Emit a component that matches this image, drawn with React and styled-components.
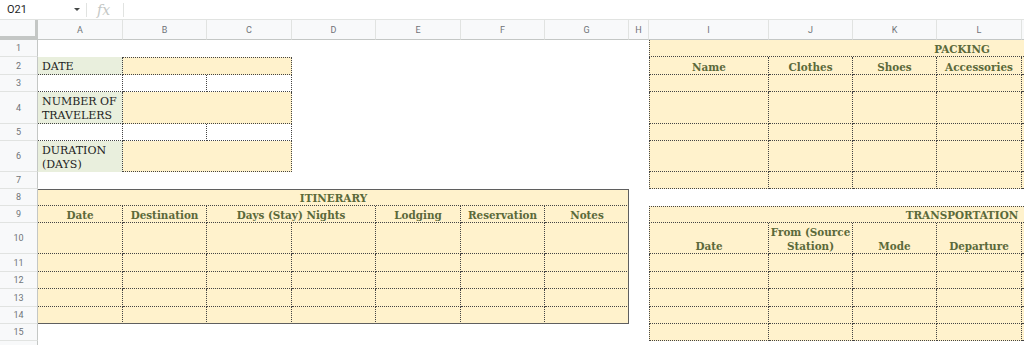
import React from 'react'
import styled, { createGlobalStyle } from 'styled-components'

const GlobalStyle = createGlobalStyle`
  *, *::before, *::after { box-sizing: border-box; }
  html, body { margin: 0; padding: 0; background: #fff; overflow: hidden; }
  body { font-family: Roboto, "Liberation Sans", sans-serif; }
`

// column widths: row header, A..O
const COLS = [38, 85, 84, 85, 84, 85, 84, 84, 20, 120, 84, 84, 85, 84, 84, 84]
// M..O lie past the window edge, their letters are never seen
const LETTERS = 'ABCDEFGHIJKL'.split('').concat(['', '', ''])
// sheet rows 1..16
const ROWS = [17, 18, 17, 32, 17, 31, 17, 17, 17, 31, 18, 17, 18, 17, 17, 17]
const VISIBLE_ROWS = 15

const DOT = '1px dotted #444'
const YELLOW = '#fff2cc'
const GREEN = '#e9efdd'
const OLIVE = '#5b693a'

const px = (list) => list.map((n) => `${n}px`).join(' ')

const Page = styled.div`
  width: 1024px;
  height: 345px;
  overflow: hidden;
  background: #fff;
`

const FormulaBar = styled.div`
  display: flex;
  align-items: center;
  height: 20px;
  border-bottom: 1px solid #e1e3e1;
`

const NameBox = styled.div`
  display: flex;
  align-items: center;
  justify-content: space-between;
  width: 86px;
  padding: 0 6px 0 7px;
  font-size: 11px;
  color: #1f1f1f;
`

const Caret = styled.span`
  width: 0;
  height: 0;
  border-left: 3px solid transparent;
  border-right: 3px solid transparent;
  border-top: 3px solid #444746;
`

const Divider = styled.span`
  width: 1px;
  height: 14px;
  background: #e1e3e1;
`

const FxLabel = styled.span`
  width: 36px;
  padding-left: 10px;
  font-family: "DejaVu Serif", serif;
  font-style: italic;
  font-size: 14px;
  color: #c4c7c5;
  line-height: 14px;
`

const Sheet = styled.div`
  display: grid;
  grid-template-columns: ${px(COLS)};
  grid-template-rows: 20px ${px(ROWS)};
  width: ${COLS.reduce((a, b) => a + b, 0)}px;
`

const Corner = styled.div`
  background: #f8f9fa;
  border-right: 3px solid #c4c7c5;
  border-bottom: 4px solid #c4c7c5;
`

const ColHead = styled.div`
  display: flex;
  align-items: center;
  justify-content: center;
  background: #f8f9fa;
  border-right: 1px solid #e1e3e1;
  border-bottom: 1px solid #c4c7c5;
  font-size: 9px;
  color: #6f7378;
`

const RowHead = styled.div`
  grid-column: 1;
  grid-row: ${(p) => p.$row};
  display: flex;
  align-items: center;
  justify-content: center;
  background: #f8f9fa;
  border-right: 1px solid #c4c7c5;
  border-bottom: 1px solid #e1e3e1;
  font-size: 9px;
  color: #6f7378;
`

const Block = styled.div`
  position: relative;
  grid-column: ${(p) => p.$col};
  grid-row: ${(p) => p.$row};
  display: grid;
  grid-template-columns: ${(p) => px(p.$cols)};
  grid-template-rows: ${(p) => px(p.$rows)};
  background: ${(p) => p.$bg || 'transparent'};

  ${(p) =>
    p.$frame &&
    `
    &::after {
      content: '';
      position: absolute;
      inset: 0;
      border-top: 1px solid #5f5f5f;
      border-right: 1px solid #5f5f5f;
      border-bottom: 1px solid #5f5f5f;
      pointer-events: none;
    }
  `}
`

const Cell = styled.div`
  grid-column: span ${(p) => p.$span || 1};
  display: flex;
  align-items: flex-end;
  justify-content: ${(p) => (p.$center ? 'center' : 'flex-start')};
  text-align: ${(p) => (p.$center ? 'center' : 'left')};
  min-width: 0;
  padding: 0 4px;
  background: ${(p) => p.$bg || 'transparent'};
  border-top: ${(p) => (p.$t ? DOT : 'none')};
  border-left: ${(p) => (p.$l ? DOT : 'none')};
  border-right: ${(p) => (p.$r ? DOT : 'none')};
  border-bottom: ${(p) => (p.$b ? DOT : 'none')};
  font-family: "DejaVu Serif", "Liberation Serif", serif;
  font-size: ${(p) => (p.$head ? '10.4px' : '11px')};
  font-weight: ${(p) => (p.$head ? 700 : 400)};
  color: ${(p) => (p.$head ? OLIVE : '#222')};
  line-height: 14px;
  white-space: nowrap;
`

const range = (n) => Array.from({ length: n }, (_, i) => i)

const InfoBlock = () => (
  <Block $col="2 / 5" $row="3 / 8" $cols={[85, 84, 85]} $rows={[18, 17, 32, 17, 31]}>
    <Cell $bg={GREEN} $r $b>DATE</Cell>
    <Cell $bg={YELLOW} $span={2} $t $r $b />
    <Cell $r $b />
    <Cell $r $b />
    <Cell $r $b />
    <Cell $bg={GREEN} $r $b>
      NUMBER OF
      <br />
      TRAVELERS
    </Cell>
    <Cell $bg={YELLOW} $span={2} $r $b />
    <Cell $r $b />
    <Cell $r $b />
    <Cell $r $b />
    <Cell $bg={GREEN} $r>
      DURATION
      <br />
      (DAYS)
    </Cell>
    <Cell $bg={YELLOW} $span={2} $r $b />
  </Block>
)

const itineraryHeads = [
  { label: 'Date' },
  { label: 'Destination' },
  { label: 'Days (Stay) Nights', span: 2 },
  { label: 'Lodging' },
  { label: 'Reservation' },
  { label: 'Notes', last: true },
]

const Itinerary = () => (
  <Block
    $col="2 / 9"
    $row="9 / 16"
    $cols={[85, 84, 85, 84, 85, 84, 84]}
    $rows={[17, 17, 31, 18, 17, 18, 17]}
    $bg={YELLOW}
    $frame
  >
    <Cell $span={7} $center $head $b>ITINERARY</Cell>
    {itineraryHeads.map((h) => (
      <Cell key={h.label} $span={h.span} $center $head $r={!h.last} $b>
        {h.label}
      </Cell>
    ))}
    {range(5).map((r) =>
      range(7).map((c) => <Cell key={`${r}-${c}`} $r={c < 6} $b={r < 4} />)
    )}
  </Block>
)

const RIGHT_COLS = [120, 84, 84, 85, 84, 84, 84]

const Packing = () => (
  <Block $col="10 / 17" $row="2 / 9" $cols={RIGHT_COLS} $rows={[17, 18, 17, 32, 17, 31, 17]} $bg={YELLOW}>
    <Cell $span={7} $center $head $l $b>PACKING</Cell>
    {['Name', 'Clothes', 'Shoes', 'Accessories', '', '', ''].map((h, i) => (
      <Cell key={i} $center $head $l={i === 0} $r $b>
        {h}
      </Cell>
    ))}
    {range(5).map((r) =>
      range(7).map((c) => <Cell key={`${r}-${c}`} $l={c === 0} $r $b />)
    )}
  </Block>
)

const Transportation = () => (
  <Block $col="10 / 17" $row="10 / 17" $cols={RIGHT_COLS} $rows={[17, 31, 18, 17, 18, 17, 17]} $bg={YELLOW}>
    <Cell $span={7} $center $head $t $l $b>TRANSPORTATION</Cell>
    <Cell $center $head $l $r $b>Date</Cell>
    <Cell $center $head $r $b>
      From (Source
      <br />
      Station)
    </Cell>
    <Cell $center $head $r $b>Mode</Cell>
    <Cell $center $head $r $b>Departure</Cell>
    <Cell $r $b />
    <Cell $r $b />
    <Cell $r $b />
    {range(5).map((r) =>
      range(7).map((c) => <Cell key={`${r}-${c}`} $l={c === 0} $r $b />)
    )}
  </Block>
)

export default function App() {
  return (
    <Page>
      <GlobalStyle />
      <FormulaBar>
        <NameBox>
          O21
          <Caret />
        </NameBox>
        <Divider />
        <FxLabel>fx</FxLabel>
        <Divider />
      </FormulaBar>
      <Sheet>
        <Corner />
        {LETTERS.map((l, i) => (
          <ColHead key={i}>{l}</ColHead>
        ))}
        {ROWS.map((_, i) => (
          <RowHead key={i} $row={i + 2}>
            {i < VISIBLE_ROWS ? i + 1 : ''}
          </RowHead>
        ))}
        <InfoBlock />
        <Itinerary />
        <Packing />
        <Transportation />
      </Sheet>
    </Page>
  )
}
